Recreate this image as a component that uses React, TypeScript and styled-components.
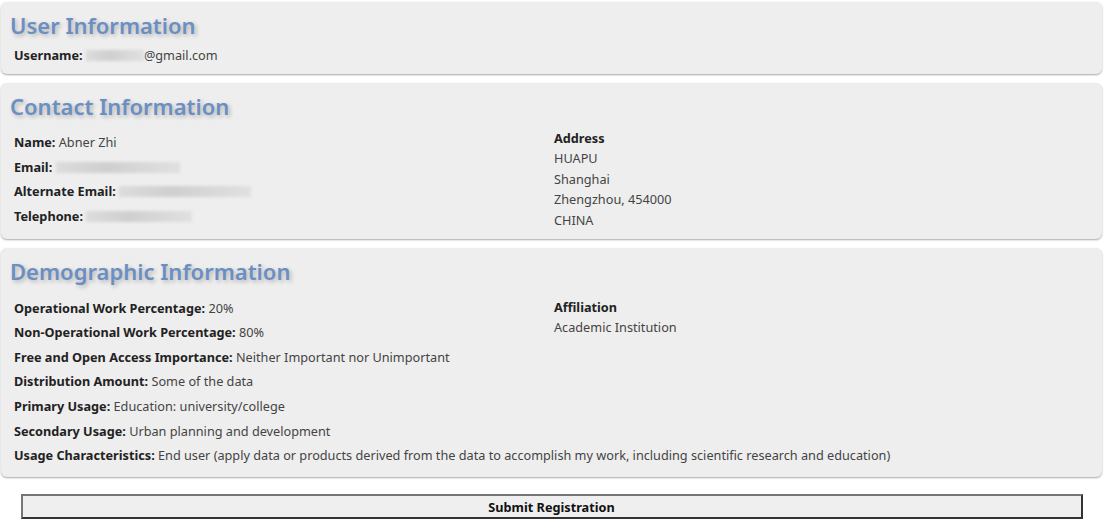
import styled, { createGlobalStyle } from 'styled-components';

const GlobalStyle = createGlobalStyle`
    html, body {
        margin: 0;
        padding: 0;
        background: #ffffff;
    }
    body {
        font-family: 'Noto Sans', 'Open Sans', sans-serif;
        font-size: 12.7px;
        color: #333;
    }
`;

interface Field {
    label: string;
    value?: string;
    blur?: number; // width of the blurred (hidden) value
}

const contactFields: Field[] = [
    { label: 'Name:', value: 'Abner Zhi' },
    { label: 'Email:', blur: 124 },
    { label: 'Alternate Email:', blur: 132 },
    { label: 'Telephone:', blur: 106 },
];

const demoFields: Field[] = [
    { label: 'Operational Work Percentage:', value: '20%' },
    { label: 'Non-Operational Work Percentage:', value: '80%' },
    { label: 'Free and Open Access Importance:', value: 'Neither Important nor Unimportant' },
    { label: 'Distribution Amount:', value: 'Some of the data' },
    { label: 'Primary Usage:', value: 'Education: university/college' },
    { label: 'Secondary Usage:', value: 'Urban planning and development' },
    {
        label: 'Usage Characteristics:',
        value: 'End user (apply data or products derived from the data to accomplish my work, including scientific research and education)',
    },
];

const addressLines = ['HUAPU', 'Shanghai', 'Zhengzhou, 454000', 'CHINA'];

const FieldRow = ({ field }: { field: Field }) => (
    <Row>
        <Label>{field.label}</Label>{' '}
        {field.value && <Value>{field.value}</Value>}
        {field.blur && <Blurred style={{ width: field.blur }} />}
    </Row>
);

const App: React.FC = () => {
    return (
        <>
            <GlobalStyle />
            <Page>
                <Card $pb={9}>
                    <Title>User Information</Title>
                    <Row $indent>
                        <Label>Username:</Label> <Blurred style={{ width: 58 }} />
                        <Value>@gmail.com</Value>
                    </Row>
                </Card>

                <Card $pb={9}>
                    <Title>Contact Information</Title>
                    <Columns>
                        <Column>
                            {contactFields.map((f) => (
                                <FieldRow key={f.label} field={f} />
                            ))}
                        </Column>
                        <Column>
                            <InfoBlock>
                                <Label>Address</Label>
                                {addressLines.map((l) => (
                                    <InfoLine key={l}>{l}</InfoLine>
                                ))}
                            </InfoBlock>
                        </Column>
                    </Columns>
                </Card>

                <Card $pb={12}>
                    <Title>Demographic Information</Title>
                    <Columns>
                        <Column>
                            {demoFields.map((f) => (
                                <FieldRow key={f.label} field={f} />
                            ))}
                        </Column>
                        <Column>
                            <InfoBlock $offset={3.5}>
                                <Label>Affiliation</Label>
                                <InfoLine>Academic Institution</InfoLine>
                            </InfoBlock>
                        </Column>
                    </Columns>
                </Card>

                <ButtonWrap>
                    <SubmitButton>Submit Registration</SubmitButton>
                </ButtonWrap>
            </Page>
        </>
    );
};

export default App;

const Page = styled.div`
    width: 1102px;
    padding: 2px 0 0 1px;
    box-sizing: border-box;
    display: flex;
    flex-direction: column;
    gap: 9px;
`;

const Card = styled.section<{ $pb: number }>`
    background-color: #eeeeee;
    border-radius: 6px;
    box-shadow: 0 1px 2px rgba(0, 0, 0, 0.35);
    padding: 8px 10px ${(p) => p.$pb}px 9px;
`;

const Title = styled.h2`
    margin: 0 0 3px 0;
    font-family: 'Noto Sans', sans-serif;
    font-weight: 600;
    font-size: 22px;
    line-height: 30px;
    color: #6b8fc2;
    text-shadow: 2px 2px 4px rgba(0, 0, 0, 0.25);
`;

const Columns = styled.div`
    display: grid;
    grid-template-columns: 540px 1fr;
    padding-top: 4px;
`;

const Column = styled.div`
    display: flex;
    flex-direction: column;
    padding-left: 4px;
`;

const Row = styled.div<{ $indent?: boolean }>`
    margin-top: 5.5px;
    line-height: 19.1px;
    white-space: nowrap;
    padding-left: ${(p) => (p.$indent ? '4px' : '0')};
`;

const Label = styled.span`
    font-weight: 700;
    color: #222;
`;

const Value = styled.span`
    color: #444;
`;

const Blurred = styled.span`
    display: inline-block;
    height: 11px;
    vertical-align: -1px;
    background: linear-gradient(90deg, #dcdcdc, #cfcfcf 40%, #d8d8d8 70%, #e0e0e0);
    filter: blur(1.5px);
`;

const InfoBlock = styled.div<{ $offset?: number }>`
    display: flex;
    flex-direction: column;
    line-height: 20.5px;
    padding-top: ${(p) => p.$offset ?? 0}px;
`;

const InfoLine = styled.span`
    color: #444;
`;

const ButtonWrap = styled.div`
    display: flex;
    justify-content: center;
    padding-top: 8px;
`;

const SubmitButton = styled.button`
    width: 1062px;
    height: 25px;
    background: #efefef;
    border-width: 2px;
    border-style: solid;
    border-color: #767676 #333 #333 #767676;
    font-family: 'Noto Sans', sans-serif;
    font-weight: 700;
    font-size: 12.7px;
    color: #111;
    padding: 0;
`;
